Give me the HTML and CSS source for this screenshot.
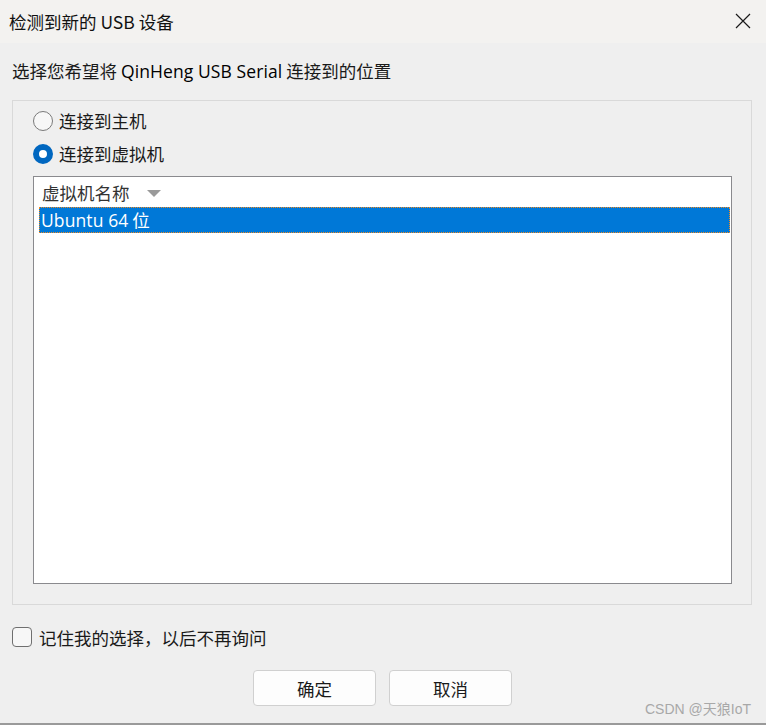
FILE: index.html
```html
<!DOCTYPE html>
<html lang="zh-CN">
<head>
<meta charset="utf-8">
<link rel="stylesheet" href="styles.css">
</head>
<body>
<div class="window">
  <div class="titlebar">
    <span class="title">检测到新的 USB 设备</span>
    <svg class="close" width="16" height="16" viewBox="0 0 16 16"><path d="M1 1 L15 15 M15 1 L1 15" stroke="#1a1a1a" stroke-width="1.2" fill="none"/></svg>
  </div>
  <div class="content">
    <div class="prompt">选择您希望将 <span class="latin">QinHeng USB Serial</span> 连接到的位置</div>
    <div class="group">
      <div class="radio-row"><span class="radio"></span><span>连接到主机</span></div>
      <div class="radio-row"><span class="radio checked"></span><span>连接到虚拟机</span></div>
      <div class="list">
        <div class="list-header"><span>虚拟机名称</span><span class="sort"></span></div>
        <div class="list-row selected"><span class="latin">Ubuntu 64</span> 位</div>
      </div>
    </div>
    <div class="check-row"><span class="checkbox"></span><span>记住我的选择，以后不再询问</span></div>
    <div class="buttons">
      <button class="btn">确定</button>
      <button class="btn">取消</button>
    </div>
  </div>
  <div class="watermark">CSDN @天狼IoT</div>
</div>
</body>
</html>
```
FILE: styles.css
```css
html, body {
  margin: 0;
  padding: 0;
  background: #efefef;
}
body {
  font-family: "Noto Sans CJK SC", "Noto Sans", sans-serif;
  color: #1a1a1a;
}
.window {
  position: relative;
  width: 766px;
  height: 725px;
  box-sizing: border-box;
  border-bottom: 2px solid #9a9a9a;
  background: #efefef;
  display: flex;
  flex-direction: column;
}
.titlebar {
  height: 43px;
  flex: none;
  background: #f3f2f0;
  display: flex;
  align-items: center;
  justify-content: space-between;
  padding: 0 15px 1px 9px;
  box-sizing: border-box;
}
.title {
  font-size: 17.5px;
  color: #111;
}
.close {
  display: block;
}
.content {
  flex: 1;
  padding: 0 14px 0 12px;
  display: flex;
  flex-direction: column;
}
.latin {
  font-family: "Open Sans", "Noto Sans", sans-serif;
  letter-spacing: 0.1px;
}
.prompt {
  margin-top: 17px;
  height: 22px;
  line-height: 22px;
  font-size: 17.5px;
  color: #1a1a1a;
}
.prompt .latin {
  color: #000;
}
.group {
  margin-top: 18px;
  height: 505px;
  box-sizing: border-box;
  border: 1px solid #d9d9d9;
  padding: 3px 19px 20px 20px;
  display: flex;
  flex-direction: column;
}
.radio-row {
  height: 33px;
  display: flex;
  align-items: center;
  gap: 6px;
  font-size: 17.5px;
}
.radio {
  width: 20px;
  height: 20px;
  box-sizing: border-box;
  border-radius: 50%;
  border: 1px solid #7a7a7a;
  background: #f7f7f7;
  flex: none;
}
.radio.checked {
  border: 6px solid #0067c0;
  background: #fff;
}
.list {
  margin-top: 6px;
  flex: 1;
  background: #fff;
  border: 1px solid #8a8a8e;
  padding: 0 1px 0 5px;
  display: flex;
  flex-direction: column;
}
.list-header {
  height: 30px;
  flex: none;
  display: flex;
  align-items: center;
  padding-left: 3px;
  font-size: 17.5px;
  color: #333;
  gap: 17px;
}
.sort {
  width: 0;
  height: 0;
  border-left: 7px solid transparent;
  border-right: 7px solid transparent;
  border-top: 7px solid #9a9a9a;
  margin-top: 2px;
}
.list-row {
  height: 26px;
  flex: none;
  box-sizing: border-box;
  line-height: 24px;
  padding-left: 1px;
  font-size: 17.5px;
}
.list-row.selected {
  background: #0078d7;
  color: #fff;
  border: 1px dotted #f08a20;
}
.check-row {
  margin-top: 21px;
  height: 22px;
  display: flex;
  align-items: center;
  gap: 7px;
  font-size: 17.5px;
}
.checkbox {
  width: 20px;
  height: 20px;
  box-sizing: border-box;
  border: 1px solid #6f6f6f;
  border-radius: 4px;
  background: #f7f7f7;
  flex: none;
}
.buttons {
  margin-top: 22px;
  display: flex;
  gap: 13px;
  padding-left: 241px;
}
.btn {
  width: 123px;
  height: 36px;
  box-sizing: border-box;
  border: 1px solid #d0d0d0;
  border-radius: 4px;
  background: #fdfdfd;
  font-family: "Noto Sans CJK SC", sans-serif;
  font-size: 17.5px;
  color: #1a1a1a;
  padding: 0;
}
.watermark {
  position: absolute;
  right: 15px;
  bottom: 5px;
  font-family: "Liberation Sans", "Noto Sans CJK SC", sans-serif;
  font-size: 14px;
  color: #a8a8a8;
}
```
